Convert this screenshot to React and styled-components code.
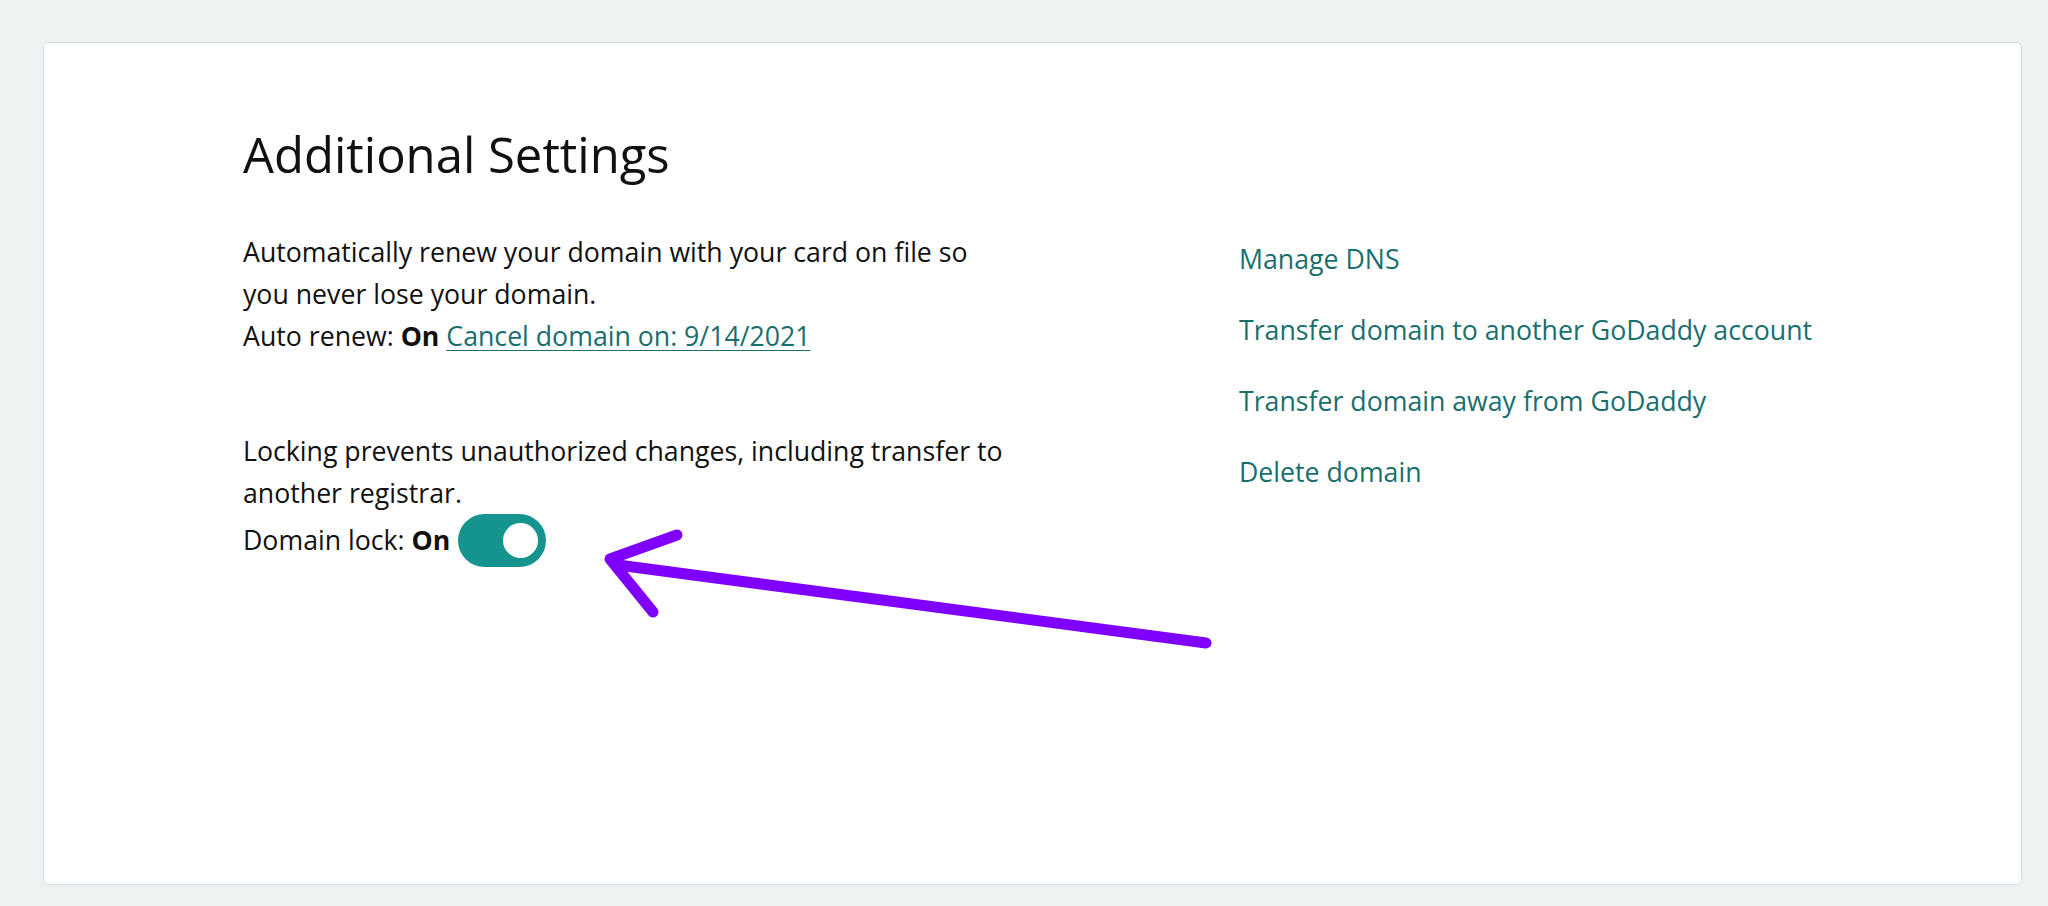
import React from 'react';
import styled, { createGlobalStyle } from 'styled-components';

const GlobalStyle = createGlobalStyle`
  html, body {
    margin: 0;
    padding: 0;
    background: #eff2f3;
    font-family: "Open Sans", Lato, "Liberation Sans", sans-serif;
    color: #111111;
  }
`;

const Page = styled.div`
  padding: 42px 26px 21px 43px;
`;

const Card = styled.section`
  position: relative;
  box-sizing: border-box;
  height: 843px;
  background: #ffffff;
  border: 1px solid #d4dbe0;
  border-radius: 6px;
  padding: 82px 200px 0 199px;
`;

const Heading = styled.h1`
  margin: 0 0 47px;
  font-size: 49px;
  line-height: 1.2;
  font-weight: 400;
`;

const Columns = styled.div`
  display: grid;
  grid-template-columns: 996px 1fr;
`;

const Block = styled.p`
  margin: 0 0 73px;
  font-size: 26.7px;
  line-height: 42px;
`;

const Strong = styled.strong`
  font-weight: 700;
`;

const InlineLink = styled.a`
  color: #196f6e;
  text-decoration: underline;
  text-underline-offset: 4px;
  text-decoration-thickness: 1px;
`;

const Toggle = styled.span`
  display: inline-block;
  box-sizing: border-box;
  width: 88px;
  height: 53px;
  padding: 9px 8px;
  margin-left: 8px;
  border-radius: 27px;
  background: ${(p) => (p.$on ? '#15948f' : '#b7bcbf')};
  vertical-align: -17px;
`;

const Knob = styled.span`
  display: block;
  width: 35px;
  height: 35px;
  border-radius: 50%;
  background: #ffffff;
  margin-left: ${(p) => (p.$on ? 'auto' : '0')};
`;

const LinkList = styled.ul`
  list-style: none;
  margin: 0;
  padding: 7px 0 0;
  display: flex;
  flex-direction: column;
  gap: 29px;
`;

const ActionLink = styled.a`
  display: block;
  font-size: 26.7px;
  line-height: 42px;
  color: #196f6e;
  text-decoration: none;
`;

const Arrow = styled.svg`
  position: absolute;
  left: -44px;
  top: -43px;
  pointer-events: none;
`;

const actions = [
  'Manage DNS',
  'Transfer domain to another GoDaddy account',
  'Transfer domain away from GoDaddy',
  'Delete domain',
];

function App() {
  return (
    <>
      <GlobalStyle />
      <Page>
        <Card>
          <Heading>Additional Settings</Heading>
          <Columns>
            <div>
              <Block>
                Automatically renew your domain with your card on file so
                <br />
                you never lose your domain.
                <br />
                Auto renew: <Strong>On</Strong>{' '}
                <InlineLink href="#">Cancel domain on: 9/14/2021</InlineLink>
              </Block>
              <Block>
                Locking prevents unauthorized changes, including transfer to
                <br />
                another registrar.
                <br />
                Domain lock: <Strong>On</Strong>
                <Toggle $on role="switch" aria-checked="true">
                  <Knob $on />
                </Toggle>
              </Block>
            </div>
            <LinkList>
              {actions.map((label) => (
                <li key={label}>
                  <ActionLink href="#">{label}</ActionLink>
                </li>
              ))}
            </LinkList>
          </Columns>
          <Arrow width="2048" height="906" viewBox="0 0 2048 906">
            <g stroke="#8000ff" strokeWidth="11" strokeLinecap="round" strokeLinejoin="round" fill="none">
              <path d="M1206 643 L618 565" />
              <path d="M677 535 L610 559 L653 612" />
            </g>
          </Arrow>
        </Card>
      </Page>
    </>
  );
}

export default App;
